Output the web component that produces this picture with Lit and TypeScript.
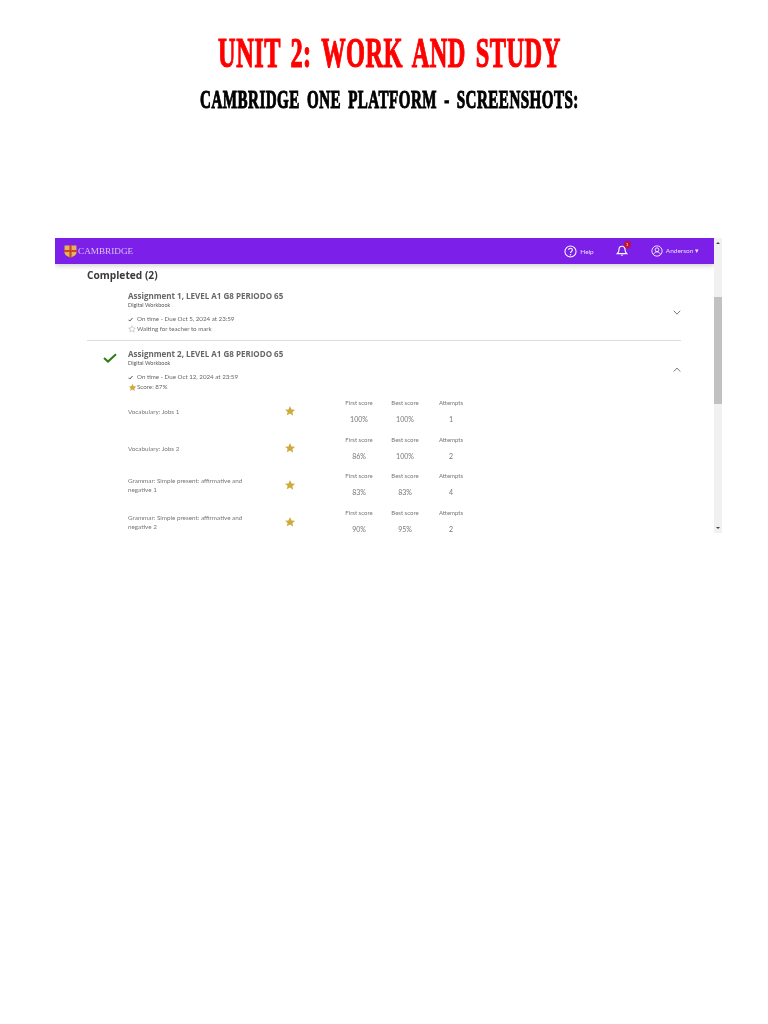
import { LitElement, html, css } from "lit";
import { customElement } from "lit/decorators.js";

const star = (size: number, fill: string, stroke = "none") => html`<svg width=${size} height=${size} viewBox="0 0 24 24"><path d="M12 2.2l3 6.6 7.2.8-5.4 4.8 1.500 7.100L12 17l-6.300 3.500 1.500-7.100L1.800 9.600 9 8.800z" fill=${fill} stroke=${stroke} stroke-width="1.300" stroke-linejoin="round"/></svg>`;
const tick = html`<svg width="5" height="5" viewBox="0 0 10 10"><path d="M1 5.500l2.600 2.600L9 2" fill="none" stroke="#555" stroke-width="2"/></svg>`;
const chevron = (up: boolean) => html`<svg width="8" height="5" viewBox="0 0 10 6"><path d=${up ? "M1 5.500L5 1.200l4 4.300" : "M1 .8l4 4.300L9 .8"} fill="none" stroke="#666" stroke-width="1.100"/></svg>`;

const rows = [
  { name: "Vocabulary: Jobs 1", first: "100%", best: "100%", attempts: "1" },
  { name: "Vocabulary: Jobs 2", first: "86%", best: "100%", attempts: "2" },
  { name: "Grammar: Simple present: affirmative and negative 1", first: "83%", best: "83%", attempts: "4" },
  { name: "Grammar: Simple present: affirmative and negative 2", first: "90%", best: "95%", attempts: "2" },
];

@customElement("app-root")
export class AppRoot extends LitElement {
  static styles = css`
    :host { display: block; width: 768px; height: 1024px; background: #fff; overflow: hidden; font-family: "Liberation Sans", sans-serif; }
    .titles { display: flex; flex-direction: column; align-items: center; padding: 31px 0 0 11px; font-family: "Liberation Serif", serif; font-weight: 700; }
    h1, h2 { margin: 0; white-space: nowrap; font-weight: 700; transform-origin: center; }
    h1 { color: #f00; font-size: 42px; line-height: 44px; -webkit-text-stroke: 1.200px #f00; transform: scaleX(.58); letter-spacing: .8px; word-spacing: 6px; }
    h2 { color: #000; font-size: 26px; line-height: 28px; margin-top: 11px; -webkit-text-stroke: 1.100px #000; transform: scaleX(.58); letter-spacing: .8px; word-spacing: 5px; }
    .shot { margin: 124px 0 0 55px; width: 667px; height: 295px; display: flex; overflow: hidden; filter: blur(.6px); font-family: "Lato", sans-serif; color: #666; }
    .main { width: 659px; flex: none; display: flex; flex-direction: column; }
    .bar { height: 26px; flex: none; background: #7b1fe9; display: flex; align-items: center; color: #e9dcfb; font-size: 6.500px; box-shadow: 0 2px 5px rgba(0,0,0,.18); position: relative; padding-left: 9px; }
    .logo { display: flex; align-items: center; gap: 1px; font-family: "Liberation Serif", serif; font-size: 9.200px; color: #d9c4f3; }
    .nav { margin-left: auto; display: flex; align-items: center; padding-right: 15px; }
    .help, .user { display: flex; align-items: center; gap: 3px; }
    .bell { position: relative; display: flex; margin: 0 23px 0 22px; }
    .badge { position: absolute; top: -4px; right: -3px; width: 7px; height: 7px; border-radius: 50%; background: #c4122f; color: #fff; font-size: 4px; line-height: 7px; text-align: center; }
    .content { padding: 5px 33px 0 32px; flex: 1; }
    .completed { font-family: "Open Sans", sans-serif; font-size: 10.200px; font-weight: 700; line-height: 12px; color: #3a3a3a; }
    .assign { display: flex; flex-direction: column; position: relative; padding-left: 41px; }
    .first { padding-top: 6px; height: 56px; box-sizing: border-box; border-bottom: 1px solid #ddd; margin-top: 4px; }
    .second { padding-top: 8px; }
    .aname { font-family: "Open Sans", sans-serif; font-size: 8px; font-weight: 700; line-height: 10px; color: #666; white-space: nowrap; }
    .sub { font-size: 5.500px; line-height: 8px; color: #555; }
    .line { display: flex; align-items: center; font-size: 6.200px; line-height: 10px; color: #666; }
    .line.on { margin-top: 5px; }
    .ico { width: 9px; display: flex; justify-content: flex-start; align-items: center; }
    .chev { position: absolute; right: 0; display: flex; }
    .first .chev { top: 25px; }
    .second .chev { top: 26px; }
    .bigcheck { position: absolute; left: 16px; top: 12px; display: flex; }
    .rows { display: flex; flex-direction: column; margin-top: 1px; }
    .row { height: 36.800px; display: grid; grid-template-columns: 118px 50px 40px 46px 46px 46px; align-items: center; font-size: 6.300px; color: #777; }
    .name { line-height: 9px; }
    .staricon { display: flex; justify-content: flex-end; }
    .cell { display: flex; flex-direction: column; align-items: center; gap: 8px; color: #777; font-size: 6px; }
    .cell b { font-weight: 400; font-size: 7px; line-height: 9px; }
    .cell span { line-height: 8px; }
    .scroll { width: 8px; flex: none; background: #f1f1f1; display: flex; flex-direction: column; align-items: center; justify-content: space-between; position: relative; }
    .thumb { position: absolute; left: 0; top: 59px; width: 8px; height: 107px; background: #c1c1c1; }
    .arrow { width: 0; height: 0; border-left: 2px solid transparent; border-right: 2px solid transparent; margin: 4px 0; }
    .up { border-bottom: 2px solid #444; }
    .down { border-top: 2px solid #444; }
  `;

  render() {
    return html`
      <div class="titles">
        <h1>UNIT 2: WORK AND STUDY</h1>
        <h2>CAMBRIDGE ONE PLATFORM - SCREENSHOTS:</h2>
      </div>
      <div class="shot">
        <div class="main">
          <div class="bar">
            <div class="logo">
              <svg width="13" height="13" viewBox="0 0 12 12"><path d="M.5.5h11v6.500c0 2.500-3 3.800-5.500 4.500C3.500 10.800.5 9.500.5 7z" fill="#e3b25a"/><path d="M0 5.500h12M6 0v12" stroke="#c8462c" stroke-width="2"/></svg>
              <span>CAMBRIDGE</span>
            </div>
            <div class="nav">
              <div class="help">
                <svg width="13" height="13" viewBox="0 0 14 14"><circle cx="7" cy="7" r="6" fill="none" stroke="#fff" stroke-width="1.100"/><path d="M5 5.400c0-2.600 4-2.600 4 0 0 1.600-2 1.600-2 3.200" fill="none" stroke="#fff" stroke-width="1.200"/><circle cx="7" cy="10.400" r=".8" fill="#fff"/></svg>
                <span>Help</span>
              </div>
              <div class="bell">
                <svg width="12" height="12" viewBox="0 0 14 14"><path d="M7 1.500c-2.600 0-3.600 2-3.600 4.200 0 2.400-1 3.300-2 4.400h11.200c-1-1.100-2-2-2-4.400C10.600 3.500 9.600 1.500 7 1.500z" fill="none" stroke="#fff" stroke-width="1.300"/><path d="M5.500 11.500a1.600 1.600 0 0 0 3 0z" fill="#fff"/></svg>
                <span class="badge">1</span>
              </div>
              <div class="user">
                <svg width="12" height="12" viewBox="0 0 14 14"><circle cx="7" cy="7" r="6" fill="none" stroke="#fff" stroke-width="1"/><circle cx="7" cy="5.500" r="2.200" fill="none" stroke="#fff" stroke-width="1"/><path d="M3 11c.8-2.200 2.200-3 4-3s3.200.8 4 3" fill="none" stroke="#fff" stroke-width="1"/></svg>
                <span>Anderson ▾</span>
              </div>
            </div>
          </div>
          <div class="content">
            <div class="completed">Completed (2)</div>
            <div class="assign first">
              <div class="aname">Assignment 1, LEVEL A1 G8 PERIODO 65</div>
              <div class="sub">Digital Workbook</div>
              <div class="line on"><span class="ico">${tick}</span>On time - Due Oct 5, 2024 at 23:59</div>
              <div class="line"><span class="ico">${star(8, "none", "#999")}</span>Waiting for teacher to mark</div>
              <div class="chev">${chevron(false)}</div>
            </div>
            <div class="assign second">
              <div class="bigcheck">
                <svg width="14" height="10" viewBox="0 0 14 10"><path d="M1 5l4 3.600L13 1.200" fill="none" stroke="#2f7d12" stroke-width="2"/></svg>
              </div>
              <div class="aname">Assignment 2, LEVEL A1 G8 PERIODO 65</div>
              <div class="sub">Digital Workbook</div>
              <div class="line on"><span class="ico">${tick}</span>On time - Due Oct 12, 2024 at 23:59</div>
              <div class="line"><span class="ico">${star(9, "#cfa93a")}</span>Score: 87%</div>
              <div class="chev">${chevron(true)}</div>
              <div class="rows">
                ${rows.map(r => html`
                  <div class="row">
                    <div class="name">${r.name}</div>
                    <div class="staricon">${star(12, "#cfa93a")}</div>
                    <div></div>
                    <div class="cell"><span>First score</span><b>${r.first}</b></div>
                    <div class="cell"><span>Best score</span><b>${r.best}</b></div>
                    <div class="cell"><span>Attempts</span><b>${r.attempts}</b></div>
                  </div>`)}
              </div>
            </div>
          </div>
        </div>
        <div class="scroll">
          <div class="arrow up"></div>
          <div class="thumb"></div>
          <div class="arrow down"></div>
        </div>
      </div>
    `;
  }
}
